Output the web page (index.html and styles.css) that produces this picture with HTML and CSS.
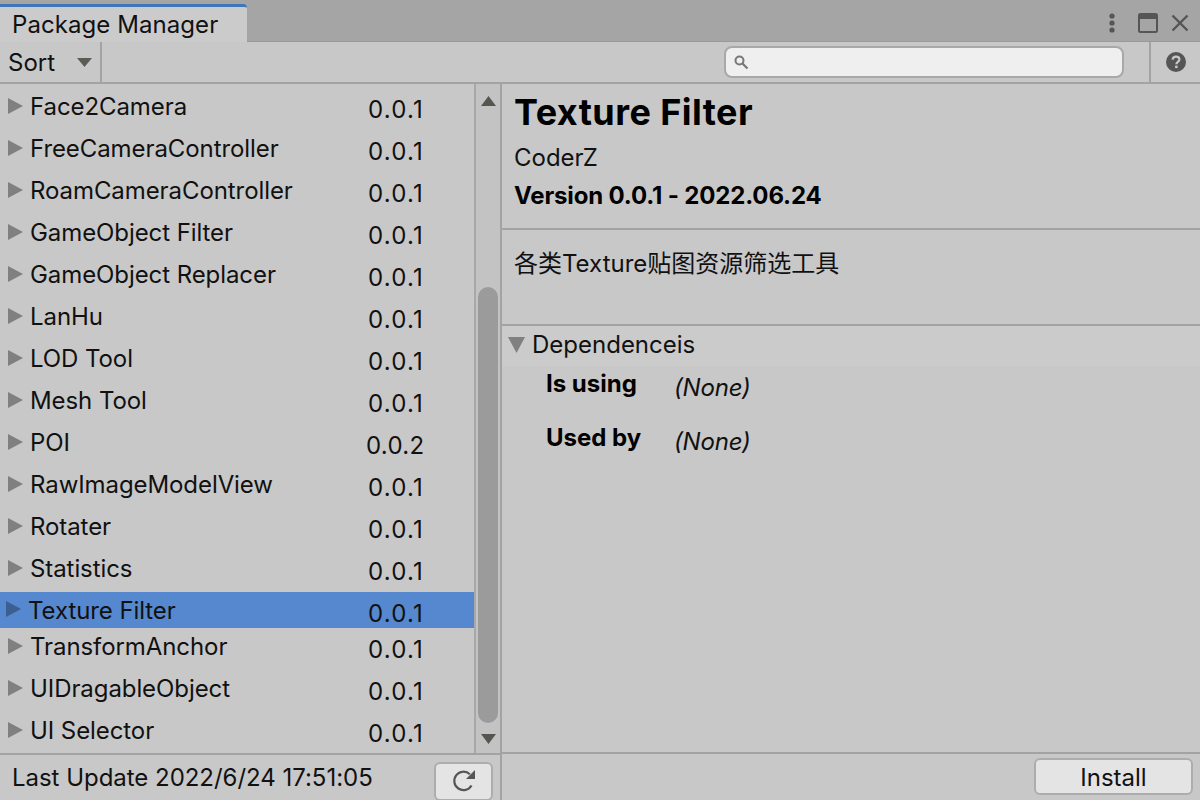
FILE: index.html
```html
<!DOCTYPE html>
<html lang="en">
<head>
<meta charset="utf-8">
<title>Package Manager</title>
<link rel="stylesheet" href="styles.css">
</head>
<body>
<div class="window">
  <header class="titlebar">
    <div class="tab">Package Manager</div>
    <div class="win-icons">
      <svg class="ico-menu" width="8" height="22" viewBox="0 0 8 22"><circle cx="4" cy="4" r="2.6"/><circle cx="4" cy="11" r="2.6"/><circle cx="4" cy="18" r="2.6"/></svg>
      <svg class="ico-max" width="20" height="20" viewBox="0 0 20 20"><rect x="1" y="1" width="18" height="18" rx="1.5" fill="none" stroke="#555" stroke-width="2"/><rect x="1" y="1" width="18" height="5" fill="#555"/></svg>
      <svg class="ico-close" width="18" height="18" viewBox="0 0 18 18"><path d="M1.5 1.5 16.5 16.5M16.5 1.5 1.5 16.5" stroke="#555" stroke-width="2.4" fill="none"/></svg>
    </div>
  </header>
  <div class="toolbar">
    <div class="sort">
      <span>Sort</span>
      <svg width="15" height="10" viewBox="0 0 15 10"><path d="M0 1H15L7.5 10Z" fill="#5c5c56"/></svg>
    </div>
    <div class="search">
      <svg width="16" height="16" viewBox="0 0 16 16"><circle cx="6.5" cy="6.5" r="4" fill="none" stroke="#777" stroke-width="2"/><path d="M9.5 9.5 14.5 14.5" stroke="#777" stroke-width="2.2"/></svg>
    </div>
    <div class="help">
      <svg width="20" height="20" viewBox="0 0 20 20"><circle cx="10" cy="10" r="10" fill="#555"/><path d="M6.6 7.6C6.8 5.5 8.2 4.6 10 4.6c2 0 3.4 1.1 3.4 2.9 0 2.4-3 2.4-3 4.7" fill="none" stroke="#c8c8c8" stroke-width="2.2"/><rect x="9.1" y="13.6" width="2.5" height="2.5" fill="#c8c8c8"/></svg>
    </div>
  </div>
  <main class="panes">
    <section class="left">
      <div class="list-wrap">
        <ul class="list">
          <li class="row"><i class="arrow"></i><span class="name">Face2Camera</span><span class="ver">0.0.1</span></li>
          <li class="row"><i class="arrow"></i><span class="name">FreeCameraController</span><span class="ver">0.0.1</span></li>
          <li class="row"><i class="arrow"></i><span class="name">RoamCameraController</span><span class="ver">0.0.1</span></li>
          <li class="row"><i class="arrow"></i><span class="name">GameObject Filter</span><span class="ver">0.0.1</span></li>
          <li class="row"><i class="arrow"></i><span class="name">GameObject Replacer</span><span class="ver">0.0.1</span></li>
          <li class="row"><i class="arrow"></i><span class="name">LanHu</span><span class="ver">0.0.1</span></li>
          <li class="row"><i class="arrow"></i><span class="name">LOD Tool</span><span class="ver">0.0.1</span></li>
          <li class="row"><i class="arrow"></i><span class="name">Mesh Tool</span><span class="ver">0.0.1</span></li>
          <li class="row"><i class="arrow"></i><span class="name">POI</span><span class="ver ver-wide">0.0.2</span></li>
          <li class="row"><i class="arrow"></i><span class="name">RawImageModelView</span><span class="ver">0.0.1</span></li>
          <li class="row"><i class="arrow"></i><span class="name">Rotater</span><span class="ver">0.0.1</span></li>
          <li class="row"><i class="arrow"></i><span class="name">Statistics</span><span class="ver">0.0.1</span></li>
          <li class="row selected"><i class="arrow"></i><span class="name">Texture Filter</span><span class="ver">0.0.1</span></li>
          <li class="row"><i class="arrow"></i><span class="name">TransformAnchor</span><span class="ver">0.0.1</span></li>
          <li class="row"><i class="arrow"></i><span class="name">UIDragableObject</span><span class="ver">0.0.1</span></li>
          <li class="row"><i class="arrow"></i><span class="name">UI Selector</span><span class="ver">0.0.1</span></li>
        </ul>
        <div class="scrollbar">
          <svg width="15" height="10" viewBox="0 0 15 10"><path d="M7.5 0 15 10H0Z" fill="#55564f"/></svg>
          <div class="track"><div class="thumb"></div></div>
          <svg width="15" height="10" viewBox="0 0 15 10"><path d="M0 0H15L7.5 10Z" fill="#55564f"/></svg>
        </div>
      </div>
      <footer class="status">
        <span>Last Update 2022/6/24 17:51:05</span>
        <button class="btn refresh" type="button">
          <svg width="26" height="26" viewBox="0 0 26 26"><path d="M20.5 17.5A9.2 9.2 0 1 1 18.8 6.2" fill="none" stroke="#555" stroke-width="2.2"/><path d="M24 2V11H15Z" fill="#555"/></svg>
        </button>
      </footer>
    </section>
    <section class="right">
      <div class="head">
        <h1>Texture Filter</h1>
        <div class="author">CoderZ</div>
        <div class="version">Version 0.0.1 - 2022.06.24</div>
      </div>
      <div class="desc">各类Texture贴图资源筛选工具</div>
      <div class="deps">
        <div class="deps-head"><svg width="18" height="16" viewBox="0 0 18 16"><path d="M0 0H17L8.5 16Z" fill="#808080"/></svg><span>Dependenceis</span></div>
        <div class="dep"><b>Is using</b><em>(None)</em></div>
        <div class="dep"><b>Used by</b><em>(None)</em></div>
      </div>
      <footer class="actions"><button class="btn install" type="button">Install</button></footer>
    </section>
  </main>
</div>
</body>
</html>
```
FILE: styles.css
```css
* { box-sizing: border-box; }
html, body { margin: 0; height: 100%; }
body {
  font-family: Inter, "Noto Sans CJK SC", sans-serif;
  font-size: 24px;
  color: #111;
  background: #c8c8c8;
  overflow: hidden;
}
.window { width: 1200px; height: 800px; display: flex; flex-direction: column; }
.titlebar {
  height: 42px;
  flex: none;
  display: flex;
  align-items: flex-start;
  justify-content: space-between;
  background: #a5a5a5;
  border-bottom: 1px solid #999;
  padding-top: 4px;
}
.tab {
  width: 247px;
  height: 38px;
  background: #cbcbcb;
  border-top: 3px solid #3f76b8;
  border-top-right-radius: 4px;
  padding-left: 12px;
  line-height: 36px;
  letter-spacing: .07px;
}
.win-icons { display: flex; align-items: center; height: 32px; padding: 5px 11px 0 0; }
.win-icons svg { fill: #555; flex: none; }
.ico-menu { margin-right: 22px; }
.ico-max { margin-right: 13px; }
.toolbar {
  height: 42px;
  flex: none;
  display: flex;
  align-items: center;
  background: #c8c8c8;
  border-bottom: 2px solid #a3a3a3;
}
.sort {
  width: 102px;
  height: 100%;
  display: flex;
  align-items: center;
  justify-content: space-between;
  padding: 1px 8px 0 8px;
  border-right: 2px solid #a3a3a3;
}
.sort svg { margin-top: -1px; }
.search {
  margin-left: auto;
  width: 400px;
  height: 32px;
  border: 2px solid #a8a8a8;
  border-radius: 8px;
  background: #efefef;
  display: flex;
  align-items: center;
  padding-left: 7px;
}
.help {
  width: 51px;
  margin-left: 25px;
  height: 100%;
  display: flex;
  align-items: center;
  justify-content: center;
  border-left: 2px solid #a3a3a3;
}
.panes { flex: 1; min-height: 0; display: flex; }
.left {
  width: 502px;
  flex: none;
  display: flex;
  flex-direction: column;
  border-right: 2px solid #a3a3a3;
}
.list-wrap { flex: 1; min-height: 0; display: flex; }
.list { flex: 1; min-width: 0; list-style: none; margin: 0; padding: 5px 0 0; }
.row {
  height: 36px;
  margin-bottom: 6px;
  display: flex;
  align-items: center;
  padding-left: 8px;
}
.arrow {
  width: 0;
  height: 0;
  flex: none;
  border-style: solid;
  border-width: 8.5px 0 8.5px 15px;
  border-color: transparent transparent transparent #808080;
  margin: -2px 7px 0 0;
}
.name { flex: 1; margin-top: -2px; letter-spacing: -.08px; }
.ver { width: 108px; flex: none; margin-top: 4px; padding-left: 2px; letter-spacing: 1.2px; }
.ver-wide { padding-left: 0; letter-spacing: .3px; }
.selected { background: #5588cf; margin: -1px 0 1px; padding-left: 6px; }
.selected .arrow { border-left-color: #3a5f90; margin-right: 8px; }
.selected .name { margin-top: 0; margin-left: -1px; }
.selected .ver { margin-top: 6px; }
.scrollbar {
  width: 26px;
  flex: none;
  display: flex;
  flex-direction: column;
  align-items: center;
  padding: 12px 0 9px;
  background: #c3c3c3;
  border-left: 2px solid #a8a8a8;
}
.track { flex: 1; width: 20px; padding: 181px 0 11px; display: flex; }
.thumb { width: 20px; background: #9b9b9b; border-radius: 10px; flex: 1; }
.status {
  height: 47px;
  flex: none;
  display: flex;
  align-items: center;
  justify-content: space-between;
  padding: 0 7px 0 12px;
  border-top: 2px solid #a3a3a3;
}
.status span { letter-spacing: -.03px; }
.btn {
  font: inherit;
  color: inherit;
  background: #e4e4e4;
  border: 2px solid #adadad;
  border-radius: 6px;
  padding: 0;
  display: flex;
  align-items: center;
  justify-content: center;
}
.refresh { width: 59px; height: 39px; margin-top: 7px; }
.right { flex: 1; min-width: 0; display: flex; flex-direction: column; }
.head { height: 146px; flex: none; padding: 6px 12px 0; border-bottom: 2px solid #a3a3a3; }
h1 { margin: 0; font-size: 36px; line-height: 44px; font-weight: 700; letter-spacing: .45px; color: #000; }
.author { line-height: 30px; margin-top: 9px; }
.version { font-weight: 700; line-height: 30px; margin-top: 8px; letter-spacing: -.16px; color: #000; }
.desc { height: 96px; flex: none; padding: 18px 12px 0; line-height: 32px; border-bottom: 2px solid #a3a3a3; }
.deps { flex: 1; min-height: 0; }
.deps-head {
  height: 40px;
  display: flex;
  align-items: center;
  gap: 6px;
  padding: 0 0 3px 6px;
  background: #cbcbcb;
}
.dep { display: flex; height: 54px; padding-left: 44px; }
.dep b { width: 128px; line-height: 36px; color: #000; }
.dep em { line-height: 44px; letter-spacing: -.2px; }
.actions {
  height: 48px;
  flex: none;
  display: flex;
  justify-content: flex-end;
  padding: 4px 7px 0 0;
  border-top: 2px solid #a3a3a3;
}
.install { width: 159px; height: 37px; padding-top: 1px; }
```
